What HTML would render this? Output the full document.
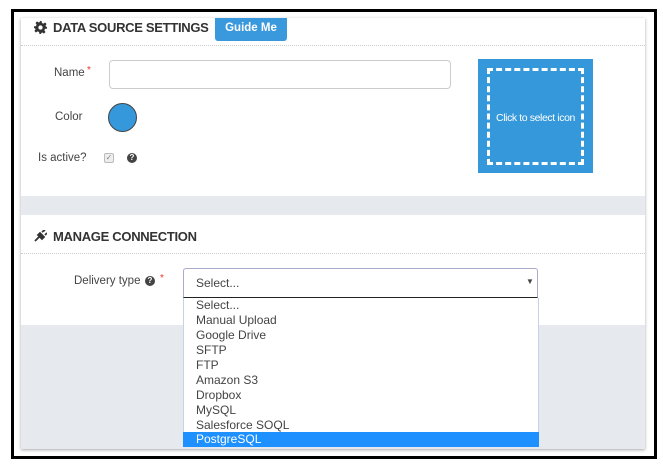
<!DOCTYPE html>
<html><head><style>
*{margin:0;padding:0;box-sizing:border-box}
body{width:663px;height:469px;background:#fff;position:relative;overflow:hidden;font-family:"Liberation Sans",sans-serif;color:#333}
.a{position:absolute}
.frame{left:11px;top:9px;width:646px;height:450px;border:3px solid #000;background:#fff}
.panel{left:21px;top:18px;width:624px;height:431px;background:#e6e9ed;box-shadow:0 1px 3px rgba(0,0,0,.35)}
.white{background:#fff}
.h{font-weight:bold;font-size:13px;color:#333;letter-spacing:-0.3px}
.dot{border-top:1px dotted #ccc;height:0}
.lbl{font-size:11.5px;color:#444}
.req{color:#e33;font-size:10px}
.q{width:10px;height:10px;border-radius:50%;background:#444;color:#fff;font-size:8px;font-weight:bold;text-align:center;line-height:10px}
.opt{left:196px;font-size:12px;color:#444;height:15px;line-height:15px}
</style></head><body>
<div class="a frame"></div>
<div class="a panel"></div>
<div class="a white" style="left:21px;top:18px;width:624px;height:178px"></div>
<div class="a white" style="left:21px;top:215px;width:624px;height:110px"></div>
<svg class="a" style="left:34px;top:21px" width="13" height="13" viewBox="0 0 12 12"><path d="M5 0h2l.3 1.8 1.4.6 1.5-1 1.4 1.4-1 1.5.6 1.4L12 5v2l-1.8.3-.6 1.4 1 1.5-1.4 1.4-1.5-1-1.4.6L7 12H5l-.3-1.8-1.4-.6-1.5 1-1.4-1.4 1-1.5-.6-1.4L0 7V5l1.8-.3.6-1.4-1-1.5 1.4-1.4 1.5 1 1.4-.6z" fill="#333"/><circle cx="6" cy="6" r="2" fill="#fff"/></svg>
<div class="a h" style="left:53px;top:20px">DATA SOURCE SETTINGS</div>
<div class="a" style="left:215px;top:18px;width:72px;height:23px;background:#3a98dc;border-radius:0 0 3px 3px;color:#fff;font-weight:bold;font-size:11.5px;text-align:center;line-height:20px">Guide Me</div>
<div class="a dot" style="left:21px;top:45px;width:624px"></div>
<div class="a lbl" style="left:54px;top:67px">Name</div>
<div class="a req" style="left:87px;top:65px">*</div>
<div class="a" style="left:109px;top:60px;width:342px;height:29px;border:1px solid #ccc;border-radius:4px"></div>
<div class="a lbl" style="left:55px;top:111px">Color</div>
<div class="a" style="left:108px;top:103px;width:29px;height:29px;border-radius:50%;background:#3498db;border:1.5px solid #444"></div>
<div class="a lbl" style="left:38px;top:152px">Is active?</div>
<div class="a" style="left:104px;top:153px;width:10px;height:10px;border:1px solid #bbb;border-radius:2px;background:#eee;font-size:8px;color:#888;line-height:8px;text-align:center">✓</div>
<div class="a q" style="left:127px;top:153px">?</div>
<div class="a" style="left:478px;top:59px;width:115px;height:114px;background:#3498db"></div>
<div class="a" style="left:487px;top:68px;width:97px;height:97px;border:3px dashed #fff"></div>
<div class="a" style="left:478px;top:112px;width:115px;text-align:center;color:#fff;font-size:10.5px;letter-spacing:-0.4px">Click to select icon</div>
<svg class="a" style="left:34px;top:230px" width="13" height="12" viewBox="0 0 13 12"><path d="M1 11l4-4M6 3l4 4-2 2-4-4zM8 2l3-2M11 5l2-2" stroke="#333" stroke-width="1.8" fill="#333"/></svg>
<div class="a h" style="left:53px;top:229px">MANAGE CONNECTION</div>
<div class="a dot" style="left:21px;top:253px;width:624px"></div>
<div class="a lbl" style="left:74px;top:275px">Delivery type</div>
<div class="a q" style="left:145px;top:276px">?</div>
<div class="a req" style="left:160px;top:273px">*</div>
<div class="a" style="left:183px;top:268px;width:355px;height:30px;border:1px solid #aac;border-radius:3px 3px 0 0;border-bottom:1.5px solid #222;background:#fff"></div>
<div class="a" style="left:196px;top:276px;font-size:12px;color:#444">Select...</div>
<div class="a" style="left:526px;top:277px;font-size:8px;color:#444">▼</div>
<div class="a" style="left:183px;top:298px;width:356px;height:149px;background:#fff;border:1px solid #c5d3e8;border-top:none"></div>
<div class="a" style="left:183px;top:432px;width:356px;height:15px;background:#1e90ff"></div>
<div class="a opt" style="top:298px">Select...</div>
<div class="a opt" style="top:313px">Manual Upload</div>
<div class="a opt" style="top:328px">Google Drive</div>
<div class="a opt" style="top:343px">SFTP</div>
<div class="a opt" style="top:358px">FTP</div>
<div class="a opt" style="top:373px">Amazon S3</div>
<div class="a opt" style="top:388px">Dropbox</div>
<div class="a opt" style="top:403px">MySQL</div>
<div class="a opt" style="top:418px">Salesforce SOQL</div>
<div class="a opt" style="top:432px;color:#fff">PostgreSQL</div>
</body></html>
